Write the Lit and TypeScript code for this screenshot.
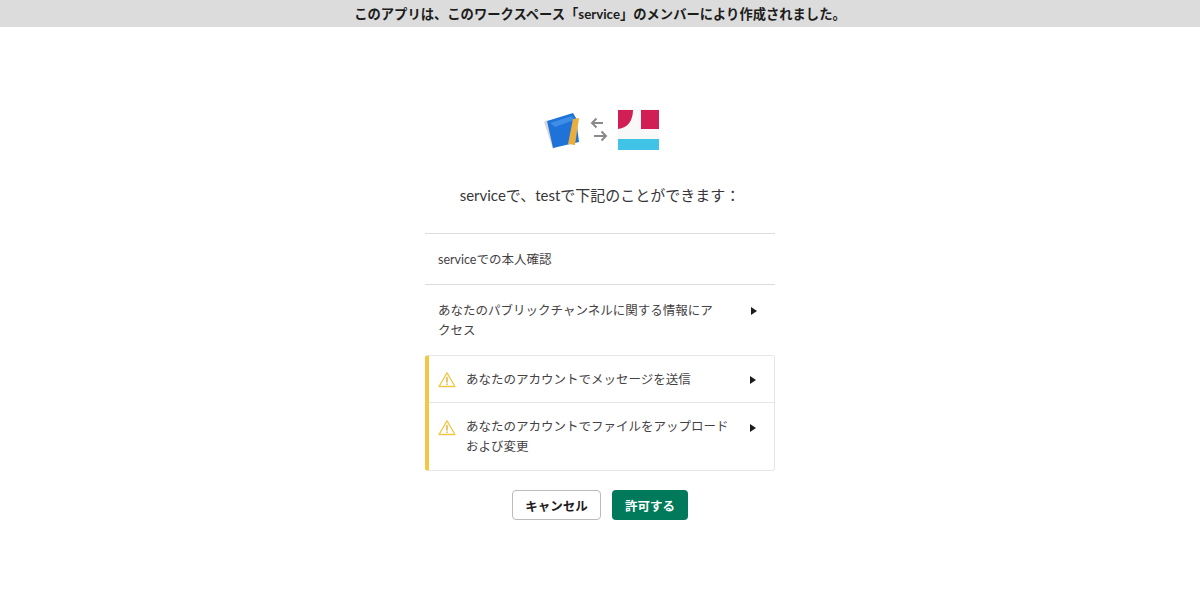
import { LitElement, html, css } from "lit";
import { customElement } from "lit/decorators.js";

@customElement("app-root")
export class AppRoot extends LitElement {
  static styles = css`
    :host { display: block; height: 598px; background: #fff; font-family: "Lato","Noto Sans CJK JP",sans-serif; color: #1d1c1d; overflow: hidden; }
    .banner { height: 27px; background: #dcdcdc; display: flex; align-items: center; justify-content: center; font-size: 13.3px; font-weight: 700; }
    .main { width: 350px; margin: 0 auto; display: flex; flex-direction: column; align-items: stretch; }
    .logos { display: flex; justify-content: center; align-items: center; margin-top: 81px; height: 44px; }
    .title { font-size: 15px; font-weight: 400; text-align: center; margin: 31px 0 26px; line-height: 24px; color: #383638; }
    .list { border-top: 1px solid #ddd; }
    .row { display: flex; font-size: 12.5px; line-height: 21px; color: #454245; padding: 15px 13px 14px; }
    .row.two { line-height: 20px; padding: 16px 13px 14px; }
    .row + .row { border-top: 1px solid #ddd; }
    .t { flex: 1; }
    .arrow { flex: none; width: 0; height: 0; border-left: 6px solid #1d1c1d; border-top: 4.5px solid transparent; border-bottom: 4.5px solid transparent; margin: 6px 5px 0 27px; }
    .warn { border: 1px solid #e6e6e6; border-left: 4px solid #f2c744; border-radius: 3px; }
    .w { display: flex; font-size: 12.5px; line-height: 21px; color: #454245; padding: 13px 13px 12px 9px; }
    .w.two { line-height: 20px; padding: 13.5px 13px 13.5px 9px; }
    .w + .w { border-top: 1px solid #e6e6e6; }
    .w .arrow { margin-top: 7px; margin-left: 20px; }
    .w svg { flex: none; margin: 2px 10px 0 0; }
    .btns { display: flex; justify-content: center; gap: 11px; margin-top: 19px; }
    .btn { height: 30px; box-sizing: border-box; border-radius: 4px; font-size: 12.5px; font-weight: 700; display: flex; align-items: center; justify-content: center; }
    .c { width: 89px; border: 1px solid #bbb; background: #fff; color: #1d1c1d; }
    .a { width: 76px; background: #007a5a; color: #fff; }
  `;
  render() {
    const tri = html`<svg width="18" height="18" viewBox="0 0 18 18" fill="none" stroke="#f2c744" stroke-width="1.3" stroke-linejoin="round"><path d="M9 1.800 L17 15.500 H1 Z"/><path d="M9 6.500v4.500M9 12.800v.6" stroke="#e0a526" stroke-linecap="round"/></svg>`;
    return html`
      <div class="banner">このアプリは、このワークスペース「service」のメンバーにより作成されました。</div>
      <div class="main">
        <div class="logos">
          <svg width="118" height="44" viewBox="0 0 118 44">
            <path d="M3 14L6 12L15 39L12 41Z" fill="#d8d8d8"/>
            <path d="M6 13L32 5L35 10L38 34L12 40Z" fill="#1f73d8"/>
            <path d="M9 15L31 8L33 12L14 19Z" fill="#3d8ee6"/>
            <path d="M32 11L38 10L34 37L27 36Z" fill="#e9ae3c"/>
            <g fill="none" stroke="#8a8a8a" stroke-width="2">
              <path d="M62 15H51M55.500 10.500L51 15L55.500 19.500"/>
              <path d="M53 28H65M60.500 23.500L65 28L60.500 32.500"/>
            </g>
            <rect x="77" y="1" width="41" height="41" rx="1" fill="#f8f8f8"/>
            <path d="M77 2H92C92 12 87 20 77 21Z" fill="#d11f55"/>
            <rect x="100" y="2" width="18" height="19" fill="#d11f55"/>
            <rect x="77" y="31" width="41" height="11" fill="#41c3e8"/>
          </svg>
        </div>
        <div class="title">serviceで、testで下記のことができます：</div>
        <div class="list">
          <div class="row"><div class="t">serviceでの本人確認</div></div>
          <div class="row two"><div class="t">あなたのパブリックチャンネルに関する情報にアクセス</div><div class="arrow"></div></div>
        </div>
        <div class="warn">
          <div class="w">${tri}<div class="t">あなたのアカウントでメッセージを送信</div><div class="arrow"></div></div>
          <div class="w two">${tri}<div class="t">あなたのアカウントでファイルをアップロードおよび変更</div><div class="arrow"></div></div>
        </div>
        <div class="btns"><div class="btn c">キャンセル</div><div class="btn a">許可する</div></div>
      </div>`;
  }
}
